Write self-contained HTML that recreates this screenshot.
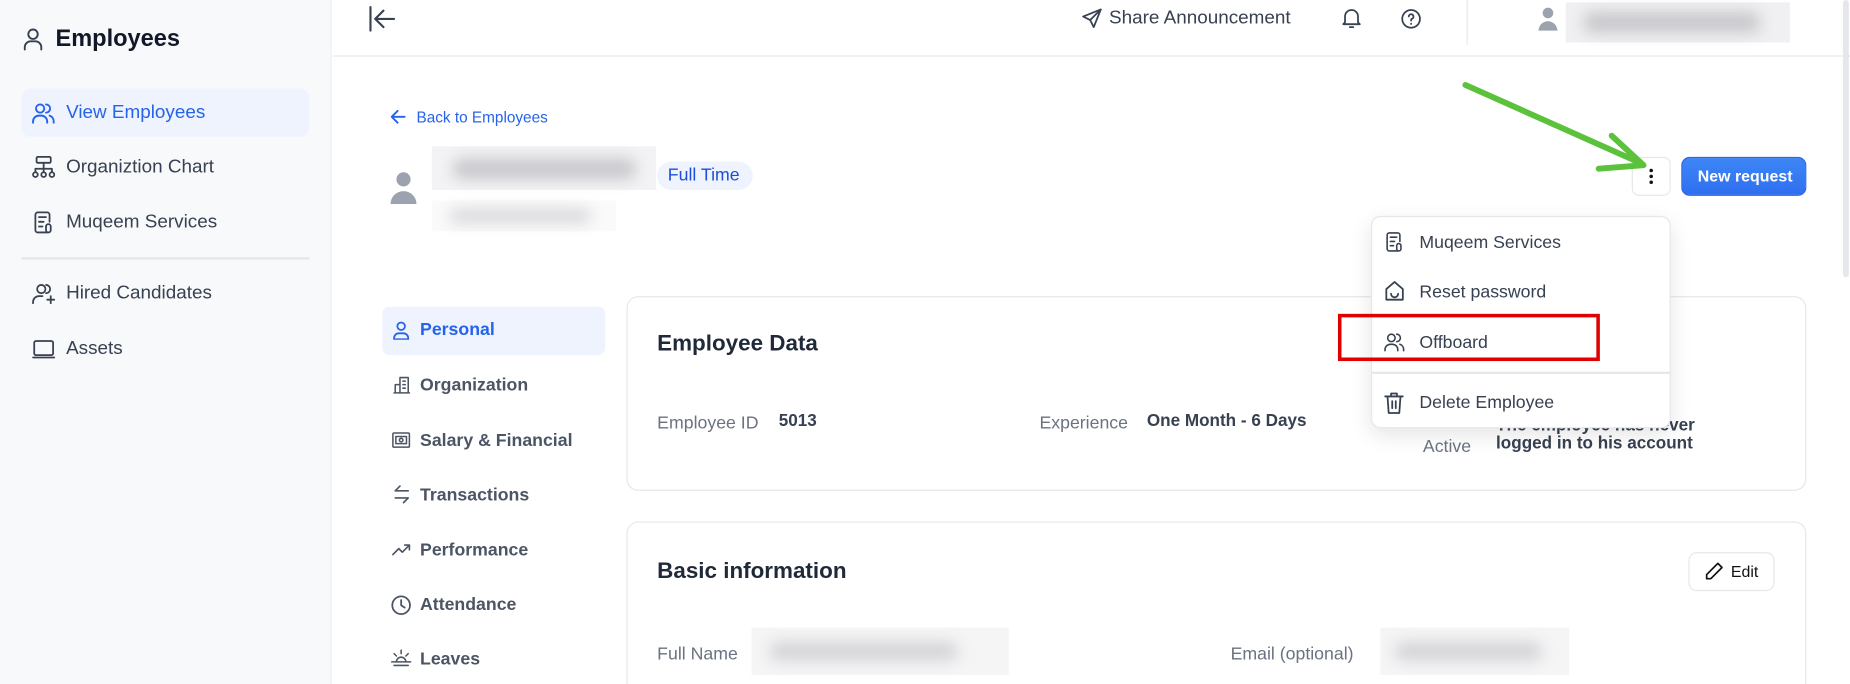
<!DOCTYPE html>
<html><head><meta charset="utf-8"><style>
*{box-sizing:border-box;margin:0;padding:0}
html,body{width:1850px;height:684px;overflow:hidden;background:#fff;font-family:"Liberation Sans",sans-serif;color:#374151}
#w{position:absolute;left:0;top:0;width:1568px;height:580px;overflow:hidden;transform:scale(1.17985);transform-origin:0 0}
.a{position:absolute}
.t{position:absolute;white-space:nowrap;line-height:1}
svg{position:absolute;fill:none;stroke-linecap:round;stroke-linejoin:round}
.blur{position:absolute;background:#f0f0f2}
.blur i{position:absolute;background:#c9c9cd;filter:blur(6px);border-radius:8px}
</style></head><body><div id="w">
<div class="a" style="left:0;top:0;width:281px;height:580px;background:#f8f9fb;border-right:1px solid #eceef1"></div>
<svg style="left:19px;top:23px" width="18" height="20" viewBox="0 0 18 20" stroke="#374151" stroke-width="1.6"><circle cx="9" cy="6" r="4"/><path d="M2 19v-2a5 5 0 0 1 5-5h4a5 5 0 0 1 5 5v2"/></svg>
<div class="t" style="left:47px;top:23px;font-size:20px;font-weight:bold;color:#111827">Employees</div>
<div class="a" style="left:18px;top:75px;width:244px;height:41px;background:#eef3fe;border-radius:8px"></div>
<svg style="left:27px;top:86px" width="20" height="20" viewBox="0 0 20 20" stroke="#2563eb" stroke-width="1.6"><circle cx="7" cy="6" r="3.5"/><path d="M1 18v-1a5 5 0 0 1 5-5h2a5 5 0 0 1 5 5v1M12 2.5a3.5 3.5 0 0 1 0 7M15 12a5 5 0 0 1 3.5 5v1"/></svg>
<div class="t" style="left:56px;top:88px;font-size:16px;color:#2563eb">View Employees</div>
<svg style="left:27px;top:132px" width="20" height="20" viewBox="0 0 20 20" stroke="#374151" stroke-width="1.5"><rect x="4" y="1" width="12" height="5" rx="1"/><path d="M10 6v5M3 11h14M3 11v3M10 11v3M17 11v3"/><circle cx="3" cy="16" r="2"/><circle cx="10" cy="16" r="2"/><circle cx="17" cy="16" r="2"/></svg>
<div class="t" style="left:56px;top:134px;font-size:16px">Organiztion Chart</div>
<svg style="left:27px;top:179px" width="20" height="20" viewBox="0 0 20 20" stroke="#374151" stroke-width="1.5"><path d="M13 18H5a2 2 0 0 1-2-2V3a2 2 0 0 1 2-2h8a2 2 0 0 1 2 2v6M6 5h6M6 9h4M6 13h3"/><rect x="12" y="11" width="4" height="7" rx="2"/></svg>
<div class="t" style="left:56px;top:181px;font-size:16px">Muqeem Services</div>
<div class="a" style="left:18px;top:218px;width:244px;height:2px;background:#e5e7eb"></div>
<svg style="left:27px;top:239px" width="20" height="20" viewBox="0 0 20 20" stroke="#374151" stroke-width="1.5"><circle cx="8" cy="6" r="3.5"/><path d="M1 18v-1a5 5 0 0 1 5-5h3M12 2.5a3.5 3.5 0 0 1 0 7M16 12v6M13 15h6"/></svg>
<div class="t" style="left:56px;top:241px;font-size:16px">Hired Candidates</div>
<svg style="left:27px;top:286px" width="20" height="20" viewBox="0 0 20 20" stroke="#374151" stroke-width="1.5"><rect x="2" y="3" width="16" height="12" rx="1.5"/><path d="M1 17h18"/></svg>
<div class="t" style="left:56px;top:288px;font-size:16px">Assets</div>
<div class="a" style="left:282px;top:47px;width:1286px;height:1px;background:#e5e7eb"></div>
<svg style="left:312px;top:5px" width="24" height="22" viewBox="0 0 24 22" stroke="#374151" stroke-width="1.8"><path d="M2 1v20M22 11H7M13 4l-7 7 7 7"/></svg>
<svg style="left:917px;top:7px" width="17" height="17" viewBox="0 0 17 17" stroke="#374151" stroke-width="1.5"><path d="M16 1 1 7l6 3 3 6zM16 1 7 10"/></svg>
<div class="t" style="left:940px;top:8px;font-size:16px">Share Announcement</div>
<svg style="left:1137px;top:6px" width="17" height="18" viewBox="0 0 17 18" stroke="#374151" stroke-width="1.5"><path d="M3 13V8a5.5 5.5 0 0 1 11 0v5l1.5 1.5h-14zM7 17h3"/></svg>
<svg style="left:1187px;top:7px" width="18" height="18" viewBox="0 0 18 18" stroke="#374151" stroke-width="1.5"><circle cx="9" cy="9" r="7.5"/><path d="M7 7a2 2 0 1 1 2.5 2c-.5.2-.5.7-.5 1.5M9 13v.3"/></svg>
<div class="a" style="left:1243px;top:0;width:1px;height:38px;background:#e5e7eb"></div>
<svg style="left:1303px;top:5px" width="18" height="22" viewBox="0 0 18 22"><circle cx="9" cy="6" r="4.5" fill="#9ca3af"/><path d="M1 21a8 8 0 0 1 16 0z" fill="#9ca3af"/></svg>
<div class="blur" style="left:1327px;top:2px;width:190px;height:34px"><i style="left:15px;top:8px;width:150px;height:18px"></i></div>
<div class="a" style="left:1562px;top:0;width:5px;height:235px;background:#e5e7eb;border-radius:3px"></div>
<svg style="left:330px;top:92px" width="14" height="14" viewBox="0 0 14 14" stroke="#2563eb" stroke-width="1.6"><path d="M13 7H2M7 2 2 7l5 5"/></svg>
<div class="t" style="left:353px;top:93px;font-size:13px;color:#2563eb">Back to Employees</div>
<svg style="left:330px;top:145px" width="24" height="28" viewBox="0 0 24 28"><circle cx="12" cy="7" r="6" fill="#9ca3af"/><path d="M1 28a11 11 0 0 1 22 0z" fill="#9ca3af"/></svg>
<div class="blur" style="left:366px;top:124px;width:190px;height:37px;background:#f3f3f5"><i style="left:18px;top:10px;width:155px;height:18px"></i></div>
<div class="blur" style="left:366px;top:170px;width:156px;height:26px;background:#fafafa"><i style="left:15px;top:7px;width:120px;height:12px;background:#d8d8dc"></i></div>
<div class="a" style="left:557px;top:137px;width:81px;height:24px;background:#eef3fe;border-radius:12px"></div>
<div class="t" style="left:566px;top:141px;font-size:15px;color:#1d4ed8">Full Time</div>
<div class="a" style="left:1383px;top:133px;width:33px;height:33px;border:1px solid #e5e7eb;border-radius:6px;background:#fff"></div>
<div class="a" style="left:1397.5px;top:143px;width:3px;height:3px;border-radius:2px;background:#111;box-shadow:0 5px 0 #111,0 10px 0 #111"></div>
<div class="a" style="left:1425px;top:133px;width:106px;height:33px;border-radius:7px;background:linear-gradient(#3d86f6,#2f6ff0);border:1px solid #2a66e8"></div>
<div class="t" style="left:1439px;top:143px;font-size:13.5px;color:#fff;font-weight:bold">New request</div>
<div class="a" style="left:324px;top:260px;width:189px;height:41px;background:#eef3fe;border-radius:6px"></div>
<svg style="left:333px;top:272px" width="14" height="16" viewBox="0 0 14 16" stroke="#2563eb" stroke-width="1.5"><circle cx="7" cy="4.5" r="3.2"/><path d="M1 15.5v-1a4 4 0 0 1 4-4h4a4 4 0 0 1 4 4v1z"/></svg>
<div class="t" style="left:356px;top:272px;font-size:15px;color:#2563eb;font-weight:bold">Personal</div>
<svg style="left:333px;top:318px" width="15" height="16" viewBox="0 0 15 16" stroke="#4b5563" stroke-width="1.3"><path d="M1 15h13M2 15V8h4M6 15V2h7v13M8.5 5h2M8.5 8h2M8.5 11h2"/></svg>
<div class="t" style="left:356px;top:319px;font-size:15px;color:#4b5563;font-weight:bold">Organization</div>
<svg style="left:332px;top:366px" width="16" height="14" viewBox="0 0 16 14" stroke="#4b5563" stroke-width="1.3"><rect x="1" y="1" width="14" height="12" rx="1"/><rect x="3.5" y="4" width="9" height="6"/><circle cx="8" cy="7" r="1.5"/></svg>
<div class="t" style="left:356px;top:366px;font-size:15px;color:#4b5563;font-weight:bold">Salary &amp; Financial</div>
<svg style="left:333px;top:411px" width="15" height="16" viewBox="0 0 15 16" stroke="#4b5563" stroke-width="1.4"><path d="M13 5H2l4-4M2 11h11l-4 4"/></svg>
<div class="t" style="left:356px;top:412px;font-size:15px;color:#4b5563;font-weight:bold">Transactions</div>
<svg style="left:332px;top:460px" width="16" height="12" viewBox="0 0 16 12" stroke="#4b5563" stroke-width="1.4"><path d="M1 10l5-5 3 3 6-6M11 2h4v4"/></svg>
<div class="t" style="left:356px;top:459px;font-size:15px;color:#4b5563;font-weight:bold">Performance</div>
<svg style="left:331px;top:504px" width="18" height="18" viewBox="0 0 18 18" stroke="#4b5563" stroke-width="1.5"><circle cx="9" cy="9" r="7.5"/><path d="M9 4.5V9l3 2"/></svg>
<div class="t" style="left:356px;top:505px;font-size:15px;color:#4b5563;font-weight:bold">Attendance</div>
<svg style="left:331px;top:549px" width="18" height="18" viewBox="0 0 18 18" stroke="#4b5563" stroke-width="1.3"><path d="M5 12a4 4 0 0 1 8 0M1 12h16M3 15h12M9 2v3M3 5l2 2M15 5l-2 2"/></svg>
<div class="t" style="left:356px;top:551px;font-size:15px;color:#4b5563;font-weight:bold">Leaves</div>
<div class="a" style="left:531px;top:251px;width:1000px;height:165px;border:1px solid #e5e7eb;border-radius:10px"></div>
<div class="t" style="left:557px;top:282px;font-size:19px;font-weight:bold;color:#1f2937">Employee Data</div>
<div class="t" style="left:557px;top:351px;font-size:15px;color:#6b7280">Employee ID</div>
<div class="t" style="left:660px;top:350px;font-size:14.5px;font-weight:bold;color:#374151">5013</div>
<div class="t" style="left:881px;top:351px;font-size:15px;color:#6b7280">Experience</div>
<div class="t" style="left:972px;top:350px;font-size:14.5px;font-weight:bold;color:#374151">One Month - 6 Days</div>
<div class="t" style="left:1206px;top:371px;font-size:15px;color:#6b7280">Active</div>
<div class="t" style="left:1268px;top:354px;font-size:14.5px;font-weight:bold;color:#374151">The employee has never</div>
<div class="t" style="left:1268px;top:369px;font-size:14.5px;font-weight:bold;color:#374151">logged in to his account</div>
<div class="a" style="left:531px;top:442px;width:1000px;height:160px;border:1px solid #e5e7eb;border-radius:10px"></div>
<div class="t" style="left:557px;top:475px;font-size:19px;font-weight:bold;color:#1f2937">Basic information</div>
<div class="a" style="left:1431px;top:468px;width:73px;height:33px;border:1px solid #e5e7eb;border-radius:7px"></div>
<svg style="left:1445px;top:476px" width="16" height="16" viewBox="0 0 16 16" stroke="#111" stroke-width="1.4"><path d="M11 1.5l3.5 3.5L5 14.5H1.5V11z"/></svg>
<div class="t" style="left:1467px;top:478px;font-size:13.5px;color:#111">Edit</div>
<div class="t" style="left:557px;top:547px;font-size:15px;color:#6b7280">Full Name</div>
<div class="blur" style="left:637px;top:532px;width:218px;height:40px;background:#f5f5f6"><i style="left:15px;top:12px;width:160px;height:16px;background:#d4d4d8"></i></div>
<div class="t" style="left:1043px;top:547px;font-size:15px;color:#6b7280">Email (optional)</div>
<div class="blur" style="left:1170px;top:532px;width:160px;height:40px;background:#f5f5f6"><i style="left:12px;top:12px;width:125px;height:16px;background:#d4d4d8"></i></div>
<div class="a" style="left:1162px;top:183px;width:254px;height:180px;background:#fff;border:1px solid #e5e7eb;border-radius:8px;box-shadow:0 6px 18px rgba(0,0,0,.10)"></div>
<svg style="left:1173px;top:196px" width="18" height="19" viewBox="0 0 20 20" stroke="#374151" stroke-width="1.5"><path d="M13 18H5a2 2 0 0 1-2-2V3a2 2 0 0 1 2-2h8a2 2 0 0 1 2 2v6M6 5h6M6 9h4M6 13h3"/><rect x="12" y="11" width="4" height="7" rx="2"/></svg>
<div class="t" style="left:1203px;top:198px;font-size:15px">Muqeem Services</div>
<svg style="left:1173px;top:238px" width="18" height="18" viewBox="0 0 18 18" stroke="#374151" stroke-width="1.5"><path d="M2 7 9 1l7 6v9H2zM6 11a3 3 0 0 0 6 0"/></svg>
<div class="t" style="left:1203px;top:240px;font-size:15px">Reset password</div>
<svg style="left:1173px;top:281px" width="18" height="18" viewBox="0 0 20 20" stroke="#374151" stroke-width="1.5"><circle cx="7" cy="6" r="3.5"/><path d="M1 18v-1a5 5 0 0 1 5-5h2a5 5 0 0 1 5 5v1M12 2.5a3.5 3.5 0 0 1 0 7M15 12a5 5 0 0 1 3.5 5v1"/></svg>
<div class="t" style="left:1203px;top:283px;font-size:15px">Offboard</div>
<div class="a" style="left:1163px;top:315px;width:252px;height:2px;background:#e5e7eb"></div>
<svg style="left:1173px;top:332px" width="17" height="19" viewBox="0 0 17 19" stroke="#374151" stroke-width="1.5"><path d="M1 4h15M6 4V1.5h5V4M3 4l1 14h9l1-14M7 8v6M10 8v6"/></svg>
<div class="t" style="left:1203px;top:334px;font-size:15px">Delete Employee</div>
<div class="a" style="left:1134px;top:266px;width:222px;height:40px;border:3px solid #e10000"></div>
<svg style="left:1230px;top:60px" width="180" height="95" viewBox="0 0 180 95" stroke="#5cc23c" stroke-width="5"><path d="M12 12 L160 78"/><path d="M136 55 L163 80 L125 83" fill="none"/></svg>
</div></body></html>
